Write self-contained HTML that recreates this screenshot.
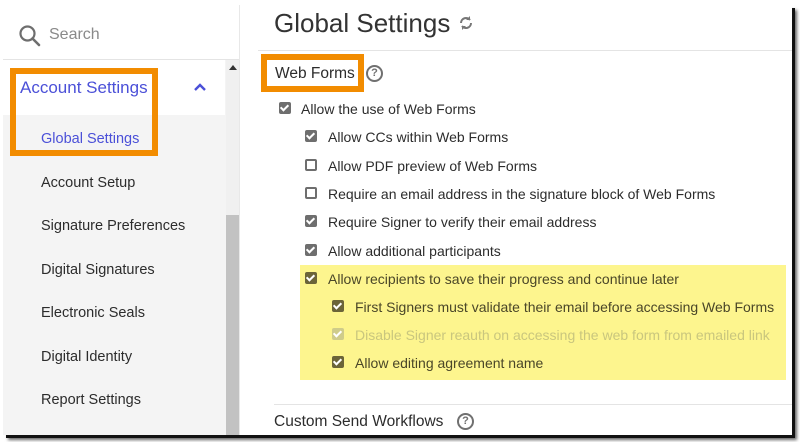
<!DOCTYPE html>
<html><head><meta charset="utf-8"><style>
*{margin:0;padding:0;box-sizing:border-box}
body{width:800px;height:442px;background:#fff;position:relative;overflow:hidden;font-family:"Liberation Sans",sans-serif;color:#2c2c2c}
.a{position:absolute;white-space:nowrap}
.frame{position:absolute;left:3px;top:5px;width:789px;height:430px;background:#fff;box-shadow:3px 3px 0 #111,5px 5px 3px #666}
.t{font-size:14px;line-height:18px}
.s{font-size:14.5px;line-height:18px}
.cb{position:absolute;width:12px;height:12px;border-radius:2px;background:#6e6e6e}
.cb.on::after{content:"";position:absolute;left:3px;top:1px;width:3px;height:6px;border:solid #fff;border-width:0 2px 2px 0;transform:rotate(45deg)}
.cb.off{background:#fff;border:2px solid #6e6e6e}
.cb.dim{background:#cfcc8a}
.cb.y{background:#6b6438}
.help{position:absolute;width:17px;height:17px;border:2px solid #707070;border-radius:50%;font-size:11px;font-weight:bold;color:#707070;text-align:center;line-height:13px}
</style></head><body>
<div class="frame"></div>
<!-- sidebar -->
<div class="a" style="left:3px;top:60px;width:237px;height:375px;background:#f4f4f4"></div>
<div class="a" style="left:3px;top:60px;width:222px;height:55px;background:#fff"></div>
<div class="a" style="left:3px;top:59px;width:237px;height:1px;background:#e4e4e4"></div>
<div class="a" style="left:3px;top:5px;width:237px;height:430px;border-right:1px solid #e8e8e8"></div>
<div class="a" style="left:226px;top:60px;width:13px;height:375px;background:#f0f0f0"></div>
<div class="a" style="left:226px;top:215px;width:13px;height:220px;background:#c2c2c2"></div>
<div class="a" style="left:229px;top:65px;width:0;height:0;border-left:4px solid transparent;border-right:4px solid transparent;border-bottom:5px solid #333"></div>
<svg class="a" style="left:18px;top:24px" width="24" height="24" viewBox="0 0 24 24"><circle cx="9.5" cy="9.5" r="7" fill="none" stroke="#6e6e6e" stroke-width="2.2"/><path d="M14.5 14.5L21 21" stroke="#6e6e6e" stroke-width="2.6" stroke-linecap="round"/></svg>
<div class="a" style="left:49px;top:26px;font-size:16px;color:#8a8a8a">Search</div>
<div class="a" style="left:20px;top:78px;font-size:17px;color:#4b50d8">Account Settings</div>
<svg class="a" style="left:193px;top:82px" width="14" height="10" viewBox="0 0 14 10"><path d="M2 8L7 3L12 8" fill="none" stroke="#4b50d8" stroke-width="2.4"/></svg>
<div class="a s" style="left:41px;top:130px;color:#4b50d8">Global Settings</div>
<div class="a s" style="left:41px;top:174px">Account Setup</div>
<div class="a s" style="left:41px;top:217px">Signature Preferences</div>
<div class="a s" style="left:41px;top:261px">Digital Signatures</div>
<div class="a s" style="left:41px;top:304px">Electronic Seals</div>
<div class="a s" style="left:41px;top:348px">Digital Identity</div>
<div class="a s" style="left:41px;top:391px">Report Settings</div>
<div class="a" style="left:10px;top:68px;width:148px;height:88px;border:6px solid #f28c00"></div>
<!-- main -->
<div class="a" style="left:274px;top:8px;font-size:26px;color:#333">Global Settings</div>
<svg class="a" style="left:458px;top:15px" width="16" height="16" viewBox="0 0 16 16"><path d="M3 8a5 5 0 0 1 9-3M13 8a5 5 0 0 1-9 3" fill="none" stroke="#777" stroke-width="2"/><path d="M12 1v4h-4zM4 15v-4h4z" fill="#777"/></svg>
<div class="a" style="left:258px;top:50px;width:534px;height:1px;background:#e4e4e4"></div>
<div class="a" style="left:275px;top:65px;font-size:15.5px">Web Forms</div>
<div class="help" style="left:366px;top:65px">?</div>
<div class="a" style="left:261px;top:54px;width:103px;height:38px;border:6px solid #f28c00"></div>
<div class="a" style="left:300px;top:265px;width:486px;height:115px;background:#fdf58e"></div>

<div class="cb on" style="left:279px;top:102px"></div><div class="a t" style="left:301px;top:100px">Allow the use of Web Forms</div>
<div class="cb on" style="left:305px;top:130px"></div><div class="a t" style="left:328px;top:128px">Allow CCs within Web Forms</div>
<div class="cb off" style="left:305px;top:159px"></div><div class="a t" style="left:328px;top:157px">Allow PDF preview of Web Forms</div>
<div class="cb off" style="left:305px;top:187px"></div><div class="a t" style="left:328px;top:185px">Require an email address in the signature block of Web Forms</div>
<div class="cb on" style="left:305px;top:215px"></div><div class="a t" style="left:328px;top:213px">Require Signer to verify their email address</div>
<div class="cb on" style="left:305px;top:244px"></div><div class="a t" style="left:328px;top:242px">Allow additional participants</div>
<div class="cb on y" style="left:305px;top:272px"></div><div class="a t" style="left:328px;top:270px;color:#4a4628">Allow recipients to save their progress and continue later</div>
<div class="cb on y" style="left:332px;top:300px"></div><div class="a t" style="left:355px;top:298px;color:#4a4628">First Signers must validate their email before accessing Web Forms</div>
<div class="cb on dim" style="left:332px;top:328px"></div><div class="a t" style="left:355px;top:326px;color:#c9c67e">Disable Signer reauth on accessing the web form from emailed link</div>
<div class="cb on y" style="left:332px;top:356px"></div><div class="a t" style="left:355px;top:354px;color:#4a4628">Allow editing agreement name</div>

<div class="a" style="left:274px;top:404px;width:518px;height:1px;background:#e4e4e4"></div>
<div class="a" style="left:274px;top:413px;font-size:15.5px">Custom Send Workflows</div>
<div class="help" style="left:457px;top:413px">?</div>
</body></html>
